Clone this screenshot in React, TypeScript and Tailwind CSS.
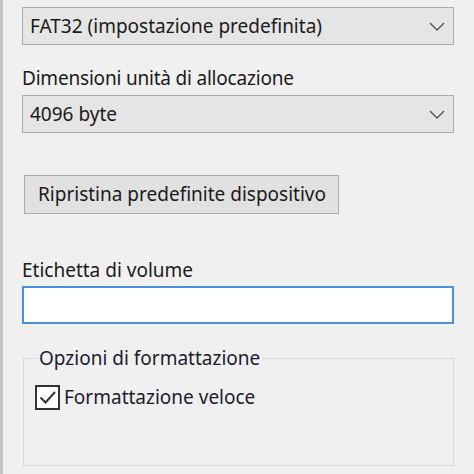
const font = { fontFamily: '"Noto Sans", "Open Sans", sans-serif' }

function Chevron() {
  return (
    <svg width="16" height="9" viewBox="0 0 16 9" className="text-[#505050]">
      <path d="M1 1 L8 8 L15 1" fill="none" stroke="currentColor" strokeWidth="1.3" />
    </svg>
  )
}

function Combo({ value }: { value: string }) {
  return (
    <div className="flex h-[38px] w-[432px] items-center justify-between border border-[#adadad] bg-[#e5e5e5] pl-[7px] pr-[8px]">
      <span className="text-[19px] leading-none text-[#1a1a1a]">{value}</span>
      <Chevron />
    </div>
  )
}

export default function App() {
  return (
    <div
      className="flex h-[474px] w-[474px] flex-col border-l-[3px] border-[#c4c4c4] bg-[#f0f0f0] pl-[19px]"
      style={font}
    >
      {/* file system */}
      <div className="mt-[7px]">
        <Combo value="FAT32 (impostazione predefinita)" />
      </div>

      {/* allocation unit */}
      <label className="mt-[22px] text-[19px] leading-[22px] tracking-[-0.2px] text-[#1a1a1a]">Dimensioni unità di allocazione</label>
      <div className="mt-[6px]">
        <Combo value="4096 byte" />
      </div>

      <button className="ml-[2px] mt-[42px] h-[39px] w-[315px] border border-[#adadad] bg-[#e1e1e1] pl-[13px] text-left text-[19px] leading-none text-[#1a1a1a]">
        Ripristina predefinite dispositivo
      </button>

      {/* volume label */}
      <label className="mt-[45px] text-[19px] leading-[22px] text-[#1a1a1a]">Etichetta di volume</label>
      <input
        type="text"
        className="mt-[5px] h-[38px] w-[432px] border-2 border-[#4a90d9] bg-white outline-none"
      />

      {/* format options */}
      <fieldset className="ml-[1px] mt-[23px] h-[119px] w-[431px] border border-[#d9d9d9] px-[11px] pt-0">
        <legend className="ml-[2px] px-[2px] text-[19px] leading-[22px] text-[#1c1c2e]">Opzioni di formattazione</legend>
        <label className="mt-[16px] flex items-center gap-[4px] text-[19px] leading-none text-[#1c1c2e]">
          <span className="flex h-[25px] w-[25px] items-center justify-center border-2 border-[#333] bg-white">
            <svg width="19" height="19" viewBox="0 0 19 19">
              <path d="M2.5 9.5 L7.5 14.5 L17 4" fill="none" stroke="#333" strokeWidth="2" />
            </svg>
          </span>
          Formattazione veloce
        </label>
      </fieldset>
    </div>
  )
}
